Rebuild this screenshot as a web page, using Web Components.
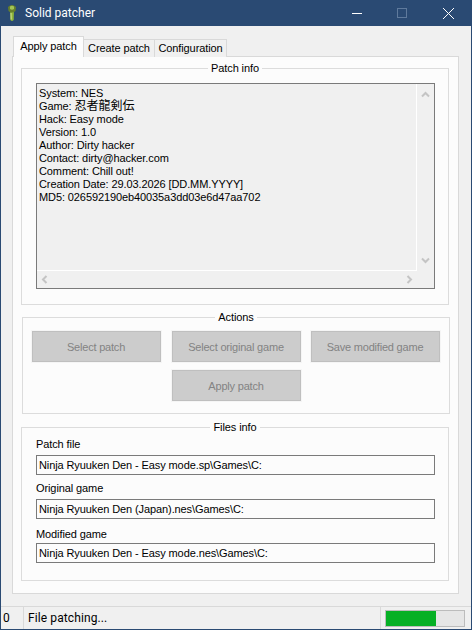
<!DOCTYPE html>
<html>
<head>
<meta charset="utf-8">
<title>Solid patcher</title>
<style>
html, body { margin:0; padding:0; background:#f0f0f0; }
body { font:11px "Liberation Sans", "Noto Sans CJK JP", sans-serif; letter-spacing:-0.1px; color:#000; }
.cjk { font-size:12px; letter-spacing:0; }
</style>
</head>
<body>
<patcher-window>
  <title-bar slot="title">Solid patcher</title-bar>
  <tab-strip slot="tabs">
    <tab-button active>Apply patch</tab-button>
    <tab-button style="width:71px">Create patch</tab-button>
    <tab-button style="width:72px">Configuration</tab-button>
  </tab-strip>
  <tab-panel slot="panel">
    <group-box label="Patch info" style="margin:0 9px 0 8px;height:244px">
      <info-box style="margin:7px 13px 0 14px">System: NES
Game: <span class="cjk">忍者龍剣伝</span>
Hack: Easy mode
Version: 1.0
Author: Dirty hacker
Contact: dirty@hacker.com
Comment: Chill out!
Creation Date: 29.03.2026 [DD.MM.YYYY]
MD5: 026592190eb40035a3dd03e6d47aa702</info-box>
    </group-box>
    <group-box label="Actions" style="margin:5px 8px 0 9px;height:104px">
      <div style="display:grid;grid-template-columns:140px 139px 129px;row-gap:8px;padding:6px 0 0 9px">
        <push-button>Select patch</push-button>
        <push-button>Select original game</push-button>
        <push-button>Save modified game</push-button>
        <push-button style="grid-column:2">Apply patch</push-button>
      </div>
    </group-box>
    <group-box label="Files info" style="margin:6px 9px 0 8px;height:161px">
      <div style="padding:2px 13px 0 14px">
        <file-field label="Patch file" value="Ninja Ryuuken Den - Easy mode.sp\Games\C:"></file-field>
        <file-field label="Original game" value="Ninja Ryuuken Den (Japan).nes\Games\C:"></file-field>
        <file-field label="Modified game" value="Ninja Ryuuken Den - Easy mode.nes\Games\C:" style="margin-top:8px;--label-gap:1px"></file-field>
      </div>
    </group-box>
  </tab-panel>
  <status-bar slot="status" count="0" progress="64">File patching...</status-bar>
</patcher-window>

<script>
function shadow(el, html) {
  el.attachShadow({mode:'open'});
  el.shadowRoot.innerHTML = html;
}

class PatcherWindow extends HTMLElement {
  constructor() {
    super();
    shadow(this, `
<style>
:host { display:flex; flex-direction:column; box-sizing:border-box; width:472px; height:630px; border:1px solid #2a4a73; border-top:0; background:#f0f0f0; overflow:hidden; }
.body { flex:1; padding:10px 12px 0 11px; min-height:0; }
</style>
<slot name="title"></slot>
<div class="body">
  <slot name="tabs"></slot>
  <slot name="panel"></slot>
</div>
<slot name="status"></slot>`);
  }
}

class TitleBar extends HTMLElement {
  constructor() {
    super();
    shadow(this, `
<style>
:host { display:flex; align-items:center; height:26px; margin:0 -1px; background:#2a4a73; color:#fff; font:12px Roboto, "Noto Sans", sans-serif; letter-spacing:0; flex:none; }
.icon { width:16px; height:20px; margin-left:4px; flex:none; }
.text { margin-left:5px; flex:1; }
.btn { width:46px; height:26px; display:flex; align-items:center; justify-content:center; flex:none; }
</style>
<svg class="icon" viewBox="0 0 16 20">
  <path d="M6.2 9 L6.4 17 Q8 19 9.7 17 L9.9 9Z" fill="#8db53a"/>
  <path d="M7 10 L7.2 16.5" stroke="#d5e58e" stroke-width="1" fill="none"/>
  <path d="M4 4 Q8 0 12 4 L11.5 8 Q8 11 4.5 8Z" fill="#66802c"/>
  <path d="M6 3.5 Q8 2 10 3.5 L10 6 Q8 7.5 6 6Z" fill="#a3c455"/>
</svg>
<span class="text"><slot></slot></span>
<div class="btn"><svg width="12" height="12" viewBox="0 0 12 12"><path d="M1 6.5H11" stroke="#fff" stroke-width="1"/></svg></div>
<div class="btn"><svg width="12" height="12" viewBox="0 0 12 12"><rect x="0.5" y="1.5" width="9" height="9" fill="none" stroke="#5f7a9c"/></svg></div>
<div class="btn"><svg width="12" height="12" viewBox="0 0 12 12"><path d="M0 1L11 12M11 1L0 12" stroke="#fff" stroke-width="1"/></svg></div>`);
  }
}

class TabStrip extends HTMLElement {
  constructor() {
    super();
    shadow(this, `
<style>
:host { display:flex; align-items:flex-end; height:21px; padding-left:1px; position:relative; z-index:1; margin-bottom:-1px; }
</style>
<slot></slot>`);
  }
}

class TabButton extends HTMLElement {
  constructor() {
    super();
    shadow(this, `
<style>
:host { display:block; box-sizing:border-box; width:71px; height:18px; border:1px solid #d9d9d9; border-bottom:0; border-left-width:0; background:#f0f0f0; text-align:center; line-height:17px; }
:host([active]) { height:21px; background:#fcfcfc; border-left-width:1px; line-height:18px; }
</style>
<slot></slot>`);
  }
}

class TabPanel extends HTMLElement {
  constructor() {
    super();
    shadow(this, `
<style>
:host { display:block; box-sizing:border-box; height:538px; border:1px solid #d9d9d9; background:#fcfcfc; padding-top:4px; }
</style>
<slot></slot>`);
  }
}

class GroupBox extends HTMLElement {
  constructor() {
    super();
    shadow(this, `
<style>
:host { display:block; box-sizing:border-box; }
fieldset { box-sizing:border-box; height:100%; margin:0; padding:0; border:1px solid #dcdcdc; }
legend { margin:0 auto; padding:0 3px; line-height:15px; }
</style>
<fieldset><legend></legend><slot></slot></fieldset>`);
    this.shadowRoot.querySelector('legend').textContent = this.getAttribute('label');
  }
}

class InfoBox extends HTMLElement {
  constructor() {
    super();
    shadow(this, `
<style>
:host { display:grid; grid-template-columns:1fr 17px; grid-template-rows:1fr 17px; box-sizing:border-box; height:206px; border:1px solid #7a7a7a; background:#f0f0f0; }
.text { padding:3px 0 0 2px; border-right:1px solid #fff; border-bottom:1px solid #fff; white-space:pre; line-height:13px; overflow:hidden; }
.v, .h { display:flex; align-items:center; justify-content:space-between; }
.v { flex-direction:column; padding:6px 0; grid-row:1; grid-column:2; }
.h { padding:0 3px; grid-row:2; grid-column:1; }
svg { width:9px; height:9px; fill:none; stroke:#c4c4c4; stroke-width:2; display:block; }
</style>
<div class="text"><slot></slot></div>
<div class="v">
  <svg viewBox="0 0 9 9"><path d="M1 6.5L4.5 3L8 6.5"/></svg>
  <svg viewBox="0 0 9 9"><path d="M1 2.5L4.5 6L8 2.5"/></svg>
</div>
<div class="h">
  <svg viewBox="0 0 9 9"><path d="M6.5 1L3 4.5L6.5 8"/></svg>
  <svg viewBox="0 0 9 9"><path d="M2.5 1L6 4.5L2.5 8"/></svg>
</div>`);
  }
}

class PushButton extends HTMLElement {
  constructor() {
    super();
    shadow(this, `
<style>
:host { display:flex; align-items:center; justify-content:center; box-sizing:border-box; width:129px; height:31px; background:#cccccc; border:1px solid #bfbfbf; box-shadow:0 0 0 1px #f5f5f5; color:#838383; letter-spacing:-0.2px; padding-right:1px; }
</style>
<slot></slot>`);
  }
}

class FileField extends HTMLElement {
  constructor() {
    super();
    shadow(this, `
<style>
:host { display:block; }
label { display:block; height:15px; line-height:15px; margin-bottom:var(--label-gap, 3px); }
.value { box-sizing:border-box; height:20px; border:1px solid #7a7a7a; background:#fcfcfc; padding-left:2px; line-height:18px; white-space:nowrap; margin-bottom:6px; }
</style>
<label></label><div class="value"></div>`);
    this.shadowRoot.querySelector('label').textContent = this.getAttribute('label');
    this.shadowRoot.querySelector('.value').textContent = this.getAttribute('value');
  }
}

class StatusBar extends HTMLElement {
  constructor() {
    super();
    shadow(this, `
<style>
:host { display:flex; align-items:flex-start; box-sizing:border-box; height:23px; flex:none; border-top:1px solid #d9d9d9; background:#f0f0f0; font:12px Roboto, "Noto Sans", sans-serif; letter-spacing:0.1px; }
.count { width:23px; box-sizing:border-box; padding-left:2px; border-right:1px solid #d9d9d9; height:100%; line-height:23px; }
.msg { flex:1; padding-left:4px; border-right:1px solid #d9d9d9; height:100%; line-height:23px; }
.bar { box-sizing:border-box; width:80px; height:17px; margin:3px 6px 0 4px; border:1px solid #bcbcbc; background:#e6e6e6; }
.fill { height:100%; background:#06b025; }
</style>
<div class="count"></div>
<div class="msg"><slot></slot></div>
<div class="bar"><div class="fill"></div></div>`);
    this.shadowRoot.querySelector('.count').textContent = this.getAttribute('count');
    this.shadowRoot.querySelector('.fill').style.width = this.getAttribute('progress') + '%';
  }
}

customElements.define('patcher-window', PatcherWindow);
customElements.define('title-bar', TitleBar);
customElements.define('tab-strip', TabStrip);
customElements.define('tab-button', TabButton);
customElements.define('tab-panel', TabPanel);
customElements.define('group-box', GroupBox);
customElements.define('info-box', InfoBox);
customElements.define('push-button', PushButton);
customElements.define('file-field', FileField);
customElements.define('status-bar', StatusBar);
</script>
</body>
</html>
